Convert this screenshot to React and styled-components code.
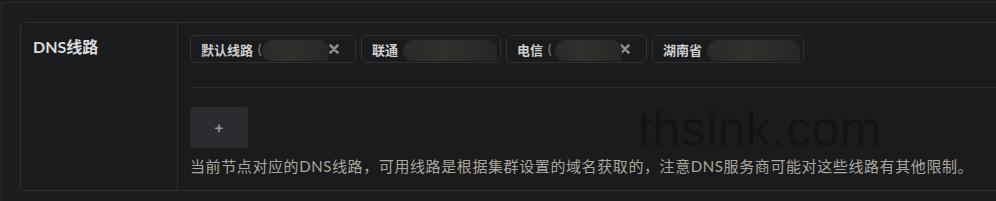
import React from "react";
import styled, { createGlobalStyle } from "styled-components";

const GlobalStyle = createGlobalStyle`
  html, body {
    margin: 0;
    padding: 0;
    background: #1b1c1e;
    overflow: hidden;
  }
  body {
    font-family: Lato, "Noto Sans CJK SC", sans-serif;
  }
`;

const routes = [
  { id: 1, name: "默认线路", width: 166, paren: true, mask: { left: 71, width: 67 } },
  { id: 2, name: "联通", width: 140, paren: false, mask: { left: 41, width: 94 } },
  { id: 3, name: "电信", width: 141, paren: true, mask: { left: 48, width: 67 } },
  { id: 4, name: "湖南省", width: 152, paren: false, mask: { left: 54, width: 93 } },
];

function CloseIcon() {
  return (
    <svg width="10" height="10" viewBox="0 0 10 10">
      <path
        d="M1.5 1.5 L8.5 8.5 M8.5 1.5 L1.5 8.5"
        stroke="#8c8c8c"
        strokeWidth="2.6"
        strokeLinecap="round"
      />
    </svg>
  );
}

function App() {
  return (
    <>
      <GlobalStyle />
      <Panel>
        <FormTable>
          <Label>DNS线路</Label>
          <Value>
            <TagList>
              {routes.map((route) => (
                <Tag key={route.id} $width={route.width}>
                  <TagName>{route.name}</TagName>
                  {route.paren && <Paren>(</Paren>}
                  <CloseButton>
                    <CloseIcon />
                  </CloseButton>
                  <Mask style={{ left: route.mask.left, width: route.mask.width }} />
                </Tag>
              ))}
            </TagList>
            <Divider />
            <AddButton>+</AddButton>
            <Help>
              当前节点对应的DNS线路，可用线路是根据集群设置的域名获取的，注意DNS服务商可能对这些线路有其他限制。
            </Help>
          </Value>
        </FormTable>
        <Watermark>thsink.com</Watermark>
      </Panel>
    </>
  );
}

const Panel = styled.div`
  position: relative;
  box-sizing: border-box;
  height: 199px;
  margin: 2px 0 0 1px;
  border-top: 1px solid #2c2d30;
  border-left: 1px solid #2c2d30;
  padding: 19px 0 0 18px;
  overflow: hidden;
`;

const FormTable = styled.div`
  display: grid;
  grid-template-columns: 157px 1fr;
  width: 1000px;
  border: 1px solid #2e2f32;
  border-radius: 5px;
  background: #1a1b1d;
`;

const Label = styled.div`
  padding: 13px 12px;
  border-right: 1px solid #2e2f32;
  font-size: 16px;
  line-height: 22px;
  font-weight: 700;
  color: #dcdcdc;
`;

const Value = styled.div`
  padding: 12px 0 13px 12px;
`;

const TagList = styled.div`
  display: flex;
  gap: 5px;
`;

const Tag = styled.div`
  position: relative;
  display: flex;
  align-items: center;
  box-sizing: border-box;
  width: ${(p) => p.$width}px;
  height: 28px;
  padding: 0 16px 0 10px;
  border: 1px solid #303134;
  border-radius: 5px;
  overflow: hidden;
`;

const TagName = styled.span`
  font-size: 13px;
  font-weight: 700;
  color: #cfcfcf;
`;

const Paren = styled.span`
  margin-left: 5px;
  font-size: 13px;
  color: #8a8a8a;
`;

const CloseButton = styled.span`
  display: flex;
  margin-left: auto;
`;

const Mask = styled.span`
  position: absolute;
  top: 4px;
  height: 21px;
  border-radius: 11px 10px 3px 10px;
  background: linear-gradient(90deg, #2a2a29 0%, #2f2f2d 40%, #2b2b2a 75%, #262627 100%);
`;

const Divider = styled.div`
  height: 1px;
  margin: 24px 0 19px;
  background: #2c2d30;
`;

const AddButton = styled.button`
  display: flex;
  align-items: center;
  justify-content: center;
  width: 58px;
  height: 41px;
  padding: 0;
  border: none;
  border-radius: 4px;
  background: #2a2c2f;
  color: #9a9a9a;
  font-family: "Liberation Sans", sans-serif;
  font-size: 15px;
  font-weight: 700;
`;

const Help = styled.p`
  margin: 7px 0 0;
  font-size: 15px;
  letter-spacing: 0.6px;
  line-height: 22px;
  color: #aaa69c;
  white-space: nowrap;
`;

const Watermark = styled.div`
  position: absolute;
  left: 636px;
  top: 98px;
  font-family: "Liberation Sans", Arial, sans-serif;
  font-size: 50px;
  line-height: 56px;
  letter-spacing: 0.5px;
  color: #121315;
  text-shadow: 0 0 1px rgba(60, 60, 62, 0.3);
  pointer-events: none;
`;

export default App;
